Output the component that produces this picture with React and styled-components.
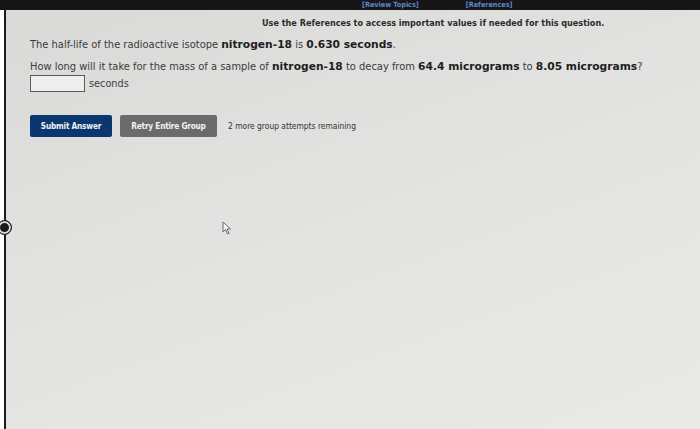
import React from 'react';
import styled, { createGlobalStyle } from 'styled-components';

const GlobalStyle = createGlobalStyle`
  html, body {
    margin: 0;
    padding: 0;
    width: 700px;
    height: 429px;
    overflow: hidden;
  }
  body {
    font-family: 'Liberation Sans', Arial, sans-serif;
    color: #2a2a2a;
  }
`;

const Screen = styled.div`
  position: relative;
  width: 700px;
  height: 429px;
  display: flex;
  flex-direction: column;
  background: linear-gradient(160deg, #d9d9d8 0%, #e0e0df 35%, #e6e6e4 70%, #e9e9e7 100%);
  border-left: 2px solid #1c1c1c;
  margin-left: 4px;
  box-sizing: border-box;
`;

const TopBar = styled.div`
  height: 10px;
  margin-left: -6px;
  background: #161616;
  display: flex;
  align-items: center;
  padding-left: 362px;
  gap: 47px;
`;

const RefLink = styled.span`
  font-family: 'DejaVu Sans Condensed', 'DejaVu Sans', sans-serif;
  font-weight: bold;
  font-size: 7.2px;
  color: #5f86cc;
  line-height: 10px;
`;

const Notice = styled.div`
  font-family: 'DejaVu Sans Condensed', 'DejaVu Sans', sans-serif;
  font-weight: bold;
  font-size: 9px;
  color: #2b2b2b;
  padding-left: 256px;
  margin-top: 8px;
  height: 12px;
`;

const Body = styled.div`
  padding-left: 24px;
  display: flex;
  flex-direction: column;
`;

const Line = styled.p`
  margin: 0;
  font-family: 'DejaVu Sans Condensed', 'DejaVu Sans', sans-serif;
  font-size: 11px;
  color: #3a3a3a;
  line-height: 14px;
  margin-top: ${({ $top }) => $top}px;

  b {
    font-family: 'DejaVu Sans', sans-serif;
    font-size: 10.7px;
    color: #1e1e1e;
  }
`;

const AnswerRow = styled.div`
  display: flex;
  align-items: center;
  gap: 4px;
  margin-top: 1px;
`;

const AnswerInput = styled.div`
  width: 53px;
  height: 15px;
  border: 1px solid #5a5a5a;
  background: #efefee;
`;

const Unit = styled.span`
  font-family: 'DejaVu Sans Condensed', 'DejaVu Sans', sans-serif;
  font-size: 10.8px;
  color: #404040;
`;

const ButtonRow = styled.div`
  display: flex;
  align-items: center;
  margin-top: 23px;
  gap: 8px;
`;

const Button = styled.div`
  width: ${({ $w }) => $w}px;
  height: 22px;
  border-radius: 2px;
  background: ${({ $gray }) => ($gray ? '#6b6b6b' : '#0b3770')};
  color: #f2f2f2;
  font-family: 'DejaVu Sans Condensed', 'DejaVu Sans', sans-serif;
  font-weight: bold;
  font-size: 8.2px;
  letter-spacing: -0.2px;
  display: flex;
  align-items: center;
  justify-content: center;
`;

const Remaining = styled.span`
  margin-left: 3px;
  font-family: 'DejaVu Sans Condensed', 'DejaVu Sans', sans-serif;
  font-size: 8.4px;
  color: #333;
`;

const Cursor = styled.svg`
  position: absolute;
  left: 216px;
  top: 221px;
`;

const EdgeBadge = styled.div`
  position: absolute;
  left: -9px;
  top: 220px;
  width: 13px;
  height: 13px;
  border-radius: 50%;
  background: #1a1a1a;
  border: 1px solid #1a1a1a;
  box-shadow: inset 0 0 0 2px #d8d8d8;
`;

export default function App() {
  return (
    <>
      <GlobalStyle />
      <Screen>
        <TopBar>
          <RefLink>[Review Topics]</RefLink>
          <RefLink>[References]</RefLink>
        </TopBar>
        <Notice>Use the References to access important values if needed for this question.</Notice>
        <Body>
          <Line $top={8}>
            The half-life of the radioactive isotope <b>nitrogen-18</b> is <b>0.630 seconds</b>.
          </Line>
          <Line $top={8}>
            How long will it take for the mass of a sample of <b>nitrogen-18</b> to decay from{' '}
            <b>64.4 micrograms</b> to <b>8.05 micrograms</b>?
          </Line>
          <AnswerRow>
            <AnswerInput />
            <Unit>seconds</Unit>
          </AnswerRow>
          <ButtonRow>
            <Button $w={82}>Submit Answer</Button>
            <Button $w={97} $gray>Retry Entire Group</Button>
            <Remaining>2 more group attempts remaining</Remaining>
          </ButtonRow>
        </Body>
        <EdgeBadge />
        <Cursor width="10" height="14" viewBox="0 0 10 14">
          <path d="M1 1 L1 11 L3.5 8.5 L5.5 13 L7 12.3 L5 8 L8.5 8 Z" fill="#f4f4f4" stroke="#6a6a6a" strokeWidth="1" />
        </Cursor>
      </Screen>
    </>
  );
}
